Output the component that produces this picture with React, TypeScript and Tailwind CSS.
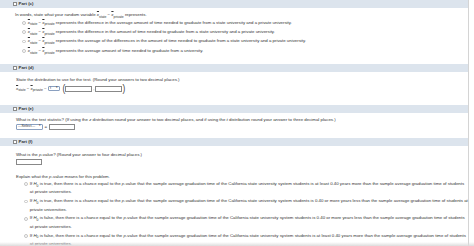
import type { ReactNode } from 'react';

function Xbar({ sub }: { sub: string }) {
  return (
    <span className="whitespace-nowrap">
      <span className="italic overline">x</span>
      <sub className="text-[3.4px] align-[-1px]">{sub}</sub>
    </span>
  );
}

function Diff() {
  return (
    <>
      <Xbar sub="state" /> − <Xbar sub="private" />
    </>
  );
}

function PartHeader({ label }: { label: string }) {
  return (
    <div className="h-[8px] bg-[#dce4ed] flex items-center pl-[13px] gap-[2px]">
      <span className="w-[3.5px] h-[3.5px] border-[0.5px] border-[#8a8a8a] bg-white" />
      <span className="font-bold text-[#333]">{label}</span>
    </div>
  );
}

function Radio({ children, h = 'h-[9.4px]' }: { children: ReactNode; h?: string }) {
  return (
    <div className={`flex items-start ${h}`}>
      <span className="mt-[2.4px] w-[3.8px] h-[3.8px] rounded-full border-[0.6px] border-[#c4c4c4] bg-white shrink-0" />
      <div className="ml-[2px] whitespace-nowrap">{children}</div>
    </div>
  );
}

function Box({ w }: { w: string }) {
  return <span className={`inline-block ${w} h-[6px] border-[0.5px] border-[#888] bg-white`} />;
}

function H0() {
  return (
    <>
      <i>H</i>
      <sub className="text-[3.4px] align-[-1px]">0</sub>
    </>
  );
}

export default function App() {
  return (
    <div className="w-[474px] h-[246px] bg-white overflow-hidden relative font-['Liberation_Sans',Arial,sans-serif] text-[4.35px] leading-[8px] text-[#333]">
      <div className="w-[469px] h-full border-r border-[#d4d4d4]">
        {/* Part (c) */}
        <PartHeader label="Part (c)" />
        <div className="pl-[15px] pt-[4px]">
          <div className="leading-[6px] h-[6px]">
            In words, state what your random variable <Diff /> represents.
          </div>
          <div className="pl-[7px] mt-[0.5px]">
            <Radio>
              <Diff /> represents the difference in the average amount of time needed to graduate from a state university and a private university.
            </Radio>
            <Radio>
              <Diff /> represents the difference in the amount of time needed to graduate from a state university and a private university.
            </Radio>
            <Radio>
              <Diff /> represents the average of the differences in the amount of time needed to graduate from a state university and a private university.
            </Radio>
            <Radio>
              <Diff /> represents the average amount of time needed to graduate from a university.
            </Radio>
          </div>
        </div>

        {/* Part (d) */}
        <div className="mt-[8px]">
          <PartHeader label="Part (d)" />
        </div>
        <div className="pl-[16px] pt-[4px]">
          <div>State the distribution to use for the test. (Round your answers to two decimal places.)</div>
          <div className="flex items-center h-[9px] gap-[1.5px]">
            <span className="whitespace-nowrap">
              <Diff /> ~
            </span>
            <span className="w-[12px] h-[5.5px] border-[0.5px] border-[#8aa0c0] rounded-[1px] bg-white flex items-center justify-between px-[1px] text-[3.6px] leading-none">
              <span>t</span>
              <span className="text-[2.6px]">▾</span>
            </span>
            <span className="flex items-center text-[#444]">
              <span className="text-[11px] leading-none font-light scale-x-75">(</span>
              <Box w="w-[27px]" />
              <span className="mx-[1px]">,</span>
              <Box w="w-[27px]" />
              <span className="text-[11px] leading-none font-light scale-x-75">)</span>
            </span>
          </div>
        </div>

        {/* Part (e) */}
        <div className="mt-[12px]">
          <PartHeader label="Part (e)" />
        </div>
        <div className="pl-[16px] pt-[3px]">
          <div>
            What is the test statistic? (If using the <i>z</i> distribution round your answer to two decimal places, and if using the <i>t</i> distribution round your answer to three decimal places.)
          </div>
          <div className="flex items-center gap-[1.5px] h-[7px] -mt-[1px]">
            <span className="w-[27px] h-[6px] border-[0.5px] border-[#8aa0c0] rounded-[1px] bg-white flex items-center justify-between px-[1px] text-[3.6px] leading-none">
              <span>---Select---</span>
              <span className="text-[2.6px]">▾</span>
            </span>
            <span>=</span>
            <Box w="w-[26px]" />
          </div>
        </div>

        {/* Part (f) */}
        <div className="mt-[8px]">
          <PartHeader label="Part (f)" />
        </div>
        <div className="pl-[16px] pt-[5px]">
          <div>
            What is the <i>p</i>-value? (Round your answer to four decimal places.)
          </div>
          <Box w="w-[26px]" />
          <div className="mt-[6px] leading-[6px]">
            Explain what the <i>p</i>-value means for this problem.
          </div>
          <div className="pl-[8px] leading-[8.4px]">
            <Radio h="h-[17.2px]">
              If <H0 /> is true, then there is a chance equal to the <i>p</i>-value that the sample average graduation time of the California state university system students is at least 0.40 years more than the sample average graduation time of students
              <br />
              at private universities.
            </Radio>
            <Radio h="h-[17.2px]">
              If <H0 /> is true, then there is a chance equal to the <i>p</i>-value that the sample average graduation time of the California state university system students is 0.40 or more years less than the sample average graduation time of students at
              <br />
              private universities.
            </Radio>
            <Radio h="h-[17.2px]">
              If <H0 /> is false, then there is a chance equal to the <i>p</i>-value that the sample average graduation time of the California state university system students is 0.40 or more years less than the sample average graduation time of students
              <br />
              at private universities.
            </Radio>
            <Radio h="h-[17.2px]">
              If <H0 /> is false, then there is a chance equal to the <i>p</i>-value that the sample average graduation time of the California state university system students is at least 0.40 years more than the sample average graduation time of students
              <br />
              at private universities.
            </Radio>
          </div>
        </div>
      </div>
      <div className="absolute left-0 right-0 bottom-0 h-[4px] bg-gradient-to-b from-transparent to-[#dcdcdc]" />
    </div>
  );
}
